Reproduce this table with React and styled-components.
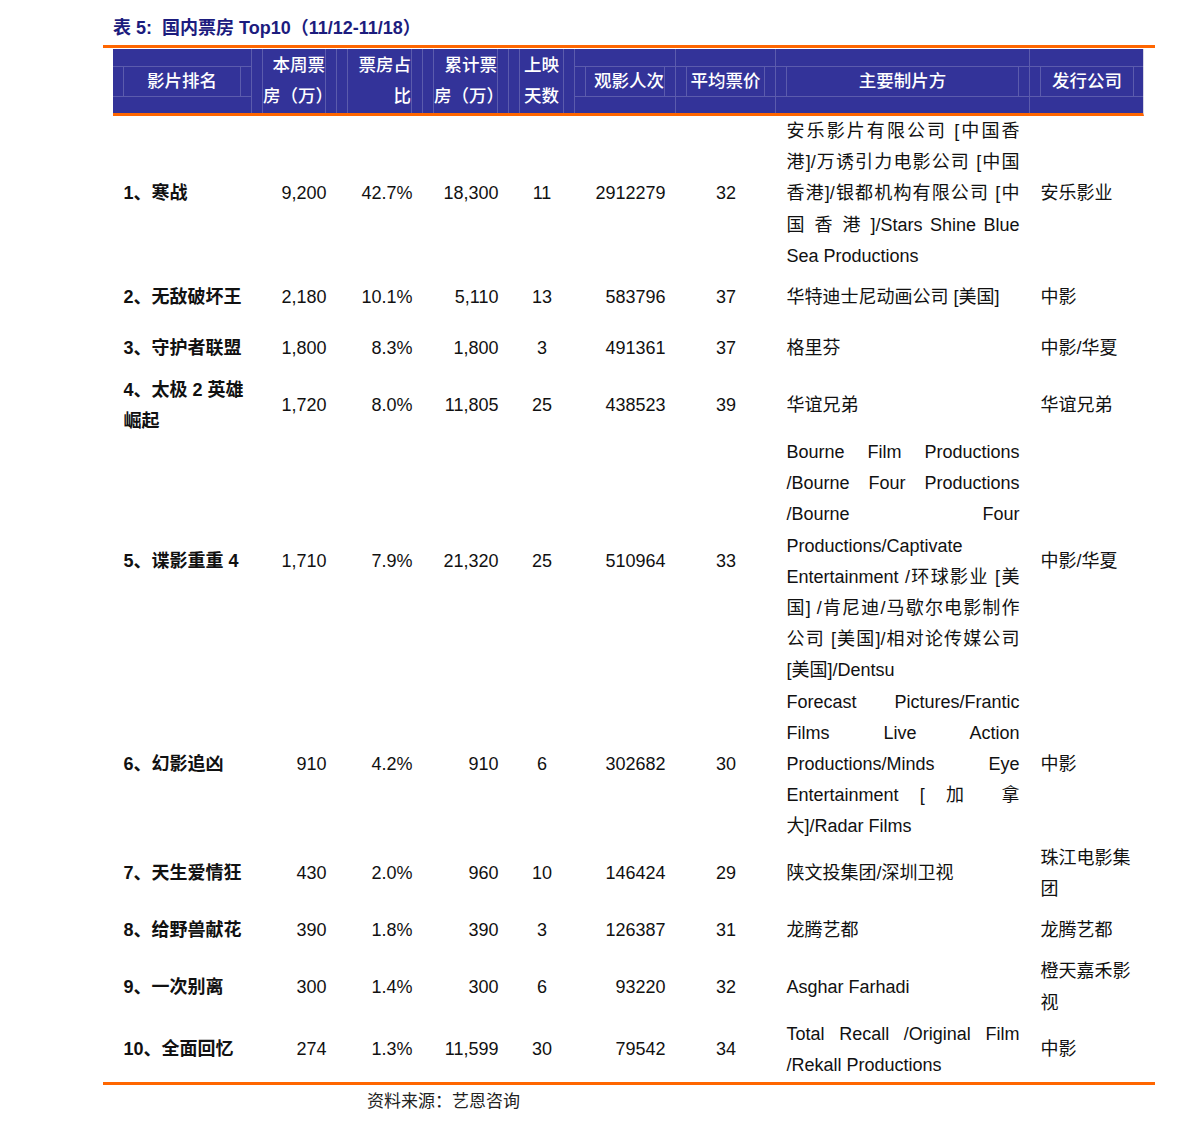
import styled, { createGlobalStyle } from "styled-components";

const NAVY = "#333399";
const ORANGE = "#ff6600";
const GRID = "rgba(255, 255, 255, 0.2)";
const COLS = "139px 85px 86px 86px 66px 101px 100px 254px 114px";

const GlobalStyle = createGlobalStyle`
  * { box-sizing: border-box; }
  body {
    margin: 0;
    background: #fff;
    font-family: "Liberation Sans", "Noto Sans CJK SC", sans-serif;
    color: #000;
  }
`;

const columns = [
  { key: "name", head: ["影片排名"], headAlign: "center", align: "left" },
  { key: "week", head: ["本周票", "房（万）"], headAlign: "right", align: "right", multi: true },
  { key: "share", head: ["票房占", "比"], headAlign: "right", align: "right", multi: true },
  { key: "total", head: ["累计票", "房（万）"], headAlign: "right", align: "right", multi: true },
  { key: "days", head: ["上映", "天数"], headAlign: "center", align: "center", multi: true },
  { key: "viewers", head: ["观影人次"], headAlign: "right", align: "right" },
  { key: "price", head: ["平均票价"], headAlign: "center", align: "center" },
  { key: "producer", head: ["主要制片方"], headAlign: "center", align: "left" },
  { key: "dist", head: ["发行公司"], headAlign: "center", align: "left" },
];

// [text, justified]
const rows = [
  {
    name: ["1、寒战"], week: "9,200", share: "42.7%", total: "18,300", days: "11",
    viewers: "2912279", price: "32",
    producer: [
      ["安乐影片有限公司 [中国香", true],
      ["港]/万诱引力电影公司 [中国", true],
      ["香港]/银都机构有限公司 [中", true],
      ["国 香 港 ]/Stars Shine Blue", true],
      ["Sea Productions", false],
    ],
    dist: ["安乐影业"],
  },
  {
    name: ["2、无敌破坏王"], week: "2,180", share: "10.1%", total: "5,110", days: "13",
    viewers: "583796", price: "37",
    producer: [["华特迪士尼动画公司 [美国]", false]],
    dist: ["中影"],
  },
  {
    name: ["3、守护者联盟"], week: "1,800", share: "8.3%", total: "1,800", days: "3",
    viewers: "491361", price: "37",
    producer: [["格里芬", false]],
    dist: ["中影/华夏"],
  },
  {
    name: ["4、太极 2 英雄", "崛起"], week: "1,720", share: "8.0%", total: "11,805", days: "25",
    viewers: "438523", price: "39",
    producer: [["华谊兄弟", false]],
    dist: ["华谊兄弟"],
  },
  {
    name: ["5、谍影重重 4"], week: "1,710", share: "7.9%", total: "21,320", days: "25",
    viewers: "510964", price: "33",
    producer: [
      ["Bourne Film Productions", true],
      ["/Bourne Four Productions", true],
      ["/Bourne Four", true],
      ["Productions/Captivate", false],
      ["Entertainment /环球影业 [美", true],
      ["国] /肯尼迪/马歇尔电影制作", true],
      ["公司 [美国]/相对论传媒公司", true],
      ["[美国]/Dentsu", false],
    ],
    dist: ["中影/华夏"],
  },
  {
    name: ["6、幻影追凶"], week: "910", share: "4.2%", total: "910", days: "6",
    viewers: "302682", price: "30",
    producer: [
      ["Forecast Pictures/Frantic", true],
      ["Films Live Action", true],
      ["Productions/Minds Eye", true],
      ["Entertainment [ 加 拿", true],
      ["大]/Radar Films", false],
    ],
    dist: ["中影"],
  },
  {
    name: ["7、天生爱情狂"], week: "430", share: "2.0%", total: "960", days: "10",
    viewers: "146424", price: "29",
    producer: [["陕文投集团/深圳卫视", false]],
    dist: ["珠江电影集", "团"],
  },
  {
    name: ["8、给野兽献花"], week: "390", share: "1.8%", total: "390", days: "3",
    viewers: "126387", price: "31",
    producer: [["龙腾艺都", false]],
    dist: ["龙腾艺都"],
  },
  {
    name: ["9、一次别离"], week: "300", share: "1.4%", total: "300", days: "6",
    viewers: "93220", price: "32",
    producer: [["Asghar Farhadi", false]],
    dist: ["橙天嘉禾影", "视"],
  },
  {
    name: ["10、全面回忆"], week: "274", share: "1.3%", total: "11,599", days: "30",
    viewers: "79542", price: "34",
    producer: [
      ["Total Recall /Original Film", true],
      ["/Rekall Productions", false],
    ],
    dist: ["中影"],
  },
];

const Page = styled.div`
  padding: 13px 0 0 103px;
  width: 1155px;
`;

const Caption = styled.div`
  margin-left: 10px;
  height: 31px;
  line-height: 31px;
  font-size: 18px;
  font-weight: 700;
  color: #1c1c7e;
  white-space: pre;
`;

const Rule = styled.div`
  width: 1052px;
  height: 3px;
  margin-top: 1px;
  background: ${ORANGE};
`;

const Table = styled.div`
  margin: 1px 0 0 10px;
  width: 1031px;
`;

const HeadRow = styled.div`
  display: grid;
  grid-template-columns: ${COLS};
  height: 67px;
  background: ${NAVY};
  border-bottom: 3px solid ${ORANGE};
  border-right: 1px solid #d6d6e4;
  color: #fff;
  font-size: 17.5px;
  font-weight: 500;
`;

const HeadCell = styled.div`
  display: flex;
  align-items: center;
  border-right: 1px solid ${GRID};
  &:last-child {
    border-right: none;
  }
`;

const HeadBand = styled.div`
  width: 100%;
  height: ${(p) => (p.$multi ? "100%" : "31px")};
  padding: 0 10px;
  border-top: ${(p) => (p.$multi ? "none" : `1px solid ${GRID}`)};
  border-bottom: ${(p) => (p.$multi ? "none" : `1px solid ${GRID}`)};
`;

const HeadText = styled.div`
  height: 100%;
  display: flex;
  flex-direction: column;
  justify-content: center;
  border-left: 1px solid ${GRID};
  border-right: 1px solid ${GRID};
  line-height: 31px;
  text-align: ${(p) => p.$align};
  white-space: nowrap;
`;

const Row = styled.div`
  display: grid;
  grid-template-columns: ${COLS};
  min-height: 51.3px;
`;

const Cell = styled.div`
  display: flex;
  flex-direction: column;
  justify-content: center;
  padding: 0 10.5px;
  font-size: 18px;
  line-height: 31.2px;
  text-align: ${(p) => p.$align};
  font-weight: ${(p) => (p.$bold ? 700 : 400)};
  color: #111;
`;

const Line = styled.div`
  text-align: ${(p) => (p.$justify ? "justify" : "inherit")};
  text-align-last: ${(p) => (p.$justify ? "justify" : "auto")};
  white-space: ${(p) => (p.$justify ? "normal" : "nowrap")};
`;

const Source = styled.div`
  margin: 1px 0 0 264px;
  height: 31px;
  line-height: 31px;
  font-size: 17px;
  color: #222;
`;

const renderCell = (col, row) => {
  const value = row[col.key];
  if (col.key === "producer") {
    return value.map(([text, justify], i) => (
      <Line key={i} $justify={justify}>
        {text}
      </Line>
    ));
  }
  if (Array.isArray(value)) {
    return value.map((text, i) => <Line key={i}>{text}</Line>);
  }
  return value;
};

const App = () => {
  return (
    <Page>
      <GlobalStyle />
      <Caption>{"表 5:  国内票房 Top10（11/12-11/18）"}</Caption>
      <Rule />
      <Table>
        <HeadRow>
          {columns.map((col) => (
            <HeadCell key={col.key}>
              <HeadBand $multi={col.multi}>
                <HeadText $align={col.headAlign}>
                  {col.head.map((t) => (
                    <div key={t}>{t}</div>
                  ))}
                </HeadText>
              </HeadBand>
            </HeadCell>
          ))}
        </HeadRow>
        {rows.map((row) => (
          <Row key={row.name[0]}>
            {columns.map((col) => (
              <Cell key={col.key} $align={col.align} $bold={col.key === "name"}>
                {renderCell(col, row)}
              </Cell>
            ))}
          </Row>
        ))}
      </Table>
      <Rule />
      <Source>资料来源：艺恩咨询</Source>
    </Page>
  );
};

export default App;
